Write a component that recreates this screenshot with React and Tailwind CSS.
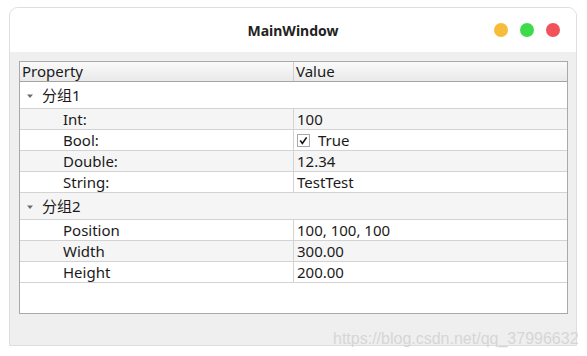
const GROUPS = [
  {
    name: '分组1',
    items: [
      { label: 'Int:', value: '100' },
      { label: 'Bool:', value: 'True', check: true },
      { label: 'Double:', value: '12.34' },
      { label: 'String:', value: 'TestTest' },
    ],
  },
  {
    name: '分组2',
    items: [
      { label: 'Position', value: '100, 100, 100' },
      { label: 'Width', value: '300.00' },
      { label: 'Height', value: '200.00' },
    ],
  },
];

function Arrow() {
  return (
    <svg width="8" height="6" viewBox="0 0 8 6" className="shrink-0">
      <path d="M1 1.5 L7 1.5 L4 5 Z" fill="#6b6b6b" />
    </svg>
  );
}

function CheckBox() {
  return (
    <svg width="13" height="13" viewBox="0 0 13 13" className="shrink-0">
      <rect x="0.5" y="0.5" width="12" height="12" fill="#ffffff" stroke="#a9a9a9" />
      <path d="M3.2 6.6 L5.4 9.4 L9.6 3.4" fill="none" stroke="#111" strokeWidth="1.6" />
    </svg>
  );
}

export default function App() {
  let idx = 0;
  const rowBg = () => (idx++ % 2 === 0 ? 'bg-white' : 'bg-[#f5f5f5]');

  return (
    <div
      className="w-[587px] h-[356px] bg-white relative pt-[7px] pl-[9px] overflow-hidden"
      style={{ fontFamily: '"Noto Sans", "Noto Sans CJK SC", sans-serif' }}
    >
      <div className="w-[568px] h-[339px] rounded-t-[9px] border border-[#dedede] bg-[#efefef] flex flex-col overflow-hidden">
        <div className="h-[44px] bg-white relative flex items-center justify-center shrink-0">
          <span className="text-[14px] font-bold text-[#222]">MainWindow</span>
          <div className="absolute right-[16px] top-[15px] flex gap-[12px]">
            <span className="w-[14px] h-[14px] rounded-full bg-[#f6bd3b]" />
            <span className="w-[14px] h-[14px] rounded-full bg-[#3ddb4c]" />
            <span className="w-[14px] h-[14px] rounded-full bg-[#f2525a]" />
          </div>
        </div>

        <div className="pt-[9px] pl-[9px]">
          <div className="w-[549px] h-[253px] border border-[#a9a9a9] bg-white flex flex-col text-[15px] text-[#1a1a1a] leading-none">
            <div className="h-[20px] flex border-b border-[#a4a4a4] bg-gradient-to-b from-[#fafafa] to-[#e9e9e9] shrink-0">
              <div className="w-[274px] border-r border-[#cfcfcf] pl-[2px] flex items-center">Property</div>
              <div className="flex-1 pl-[2px] flex items-center">Value</div>
            </div>

            {GROUPS.map(g => (
              <div key={g.name}>
                <div className={`h-[27px] flex items-center gap-[8px] pl-[6px] pt-[1px] border-b border-[#d3d3d3] ${rowBg()}`}>
                  <Arrow />
                  <span>{g.name}</span>
                </div>
                {g.items.map(it => (
                  <div key={it.label} className={`h-[21px] flex border-b border-[#d3d3d3] ${rowBg()}`}>
                    <div className="w-[274px] border-r border-[#d3d3d3] pl-[43px] pt-[1px] flex items-center">{it.label}</div>
                    <div className="flex-1 pl-[3px] pt-[1px] flex items-center gap-[8px]">
                      {it.check && <CheckBox />}
                      <span>{it.value}</span>
                    </div>
                  </div>
                ))}
              </div>
            ))}
          </div>
        </div>
      </div>

      <span
        className="absolute left-[333px] top-[327px] text-[16px] text-[#d6d6d6] whitespace-nowrap"
        style={{ fontFamily: '"Liberation Sans", sans-serif' }}
      >
        https://blog.csdn.net/qq_37996632
      </span>
    </div>
  );
}
